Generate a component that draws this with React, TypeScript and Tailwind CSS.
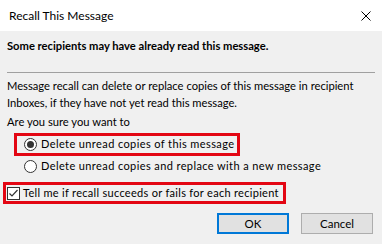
export default function App() {
  return (
    <div
      className="w-[382px] h-[244px] bg-[#f0f0f0] overflow-hidden text-black"
      style={{ fontFamily: "Lato, 'Noto Sans', sans-serif" }}
    >
      <div className="h-[31px] bg-white flex items-center justify-between pl-[9px] pr-[11px]">
        <span className="text-[12px]">Recall This Message</span>
        <svg width="10" height="10" viewBox="0 0 10 10" className="mt-[1px]">
          <path d="M0.5 0.5 L9.5 9.5 M9.5 0.5 L0.5 9.5" stroke="#000" strokeWidth="1" />
        </svg>
      </div>
      <div className="px-[7px]">
        <p className="mt-[7px] font-bold text-[11.2px] leading-[16px]">
          Some recipients may have already read this message.
        </p>
        <div className="mt-[18px] h-px bg-[#a0a0a0]" />
        <p className="mt-[5px] text-[11.2px] leading-[16.5px]">
          Message recall can delete or replace copies of this message in recipient
          <br />
          Inboxes, if they have not yet read this message.
        </p>
        <p className="mt-[3px] text-[11.2px] leading-[16px]">Are you sure you want to</p>

        <div className="mt-[3px] ml-[7px] w-[226px] h-[23px] border-[3px] border-[#e30613] flex items-center pl-[7px] gap-[4px] text-[11px] tracking-[0.4px]">
          <span className="w-[13px] h-[13px] rounded-full border border-[#333] flex items-center justify-center bg-white">
            <span className="w-[7px] h-[7px] rounded-full bg-[#333]" />
          </span>
          <span>Delete unread copies of this message</span>
        </div>

        <div className="ml-[17px] h-[20px] flex items-center gap-[4px] text-[11px] tracking-[0.4px]">
          <span className="w-[13px] h-[13px] rounded-full border border-[#333] bg-white" />
          <span>Delete unread copies and replace with a new message</span>
        </div>

        <div className="mt-[6px] ml-[-4px] w-[283px] h-[22px] border-[3px] border-[#e30613] flex items-center pl-[1px] gap-[3px] text-[11px] tracking-[0.3px]">
          <span className="w-[13px] h-[13px] border border-[#333] bg-white flex items-center justify-center">
            <svg width="11" height="11" viewBox="0 0 11 11">
              <path d="M1.5 5.5 L4 8 L9.5 2" fill="none" stroke="#333" strokeWidth="1.2" />
            </svg>
          </span>
          <span>Tell me if recall succeeds or fails for each recipient</span>
        </div>

        <div className="mt-[9px] pr-[2px] flex justify-end gap-[12px] text-[11.5px]">
          <button className="w-[72px] h-[21px] bg-[#e1e1e1] border-2 border-[#0078d7] flex items-center justify-center">
            OK
          </button>
          <button className="w-[72px] h-[21px] bg-[#e1e1e1] border border-[#adadad] flex items-center justify-center">
            Cancel
          </button>
        </div>
      </div>
    </div>
  );
}
